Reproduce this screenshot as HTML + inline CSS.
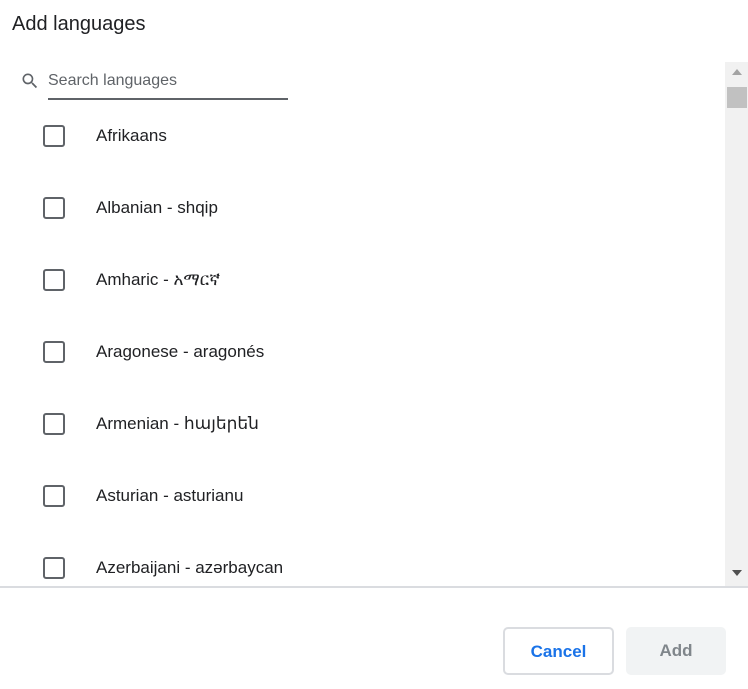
<!DOCTYPE html>
<html><head><style>
*{margin:0;padding:0;box-sizing:border-box}
body{width:748px;height:689px;background:#fff;font-family:"Liberation Sans","Noto Sans CJK JP","DejaVu Sans",sans-serif;color:#202124;position:relative;overflow:hidden}
.title{position:absolute;left:12px;top:13px;font-size:20px;color:#202124}
.search{position:absolute;left:48px;top:72px;font-size:16px;color:#5f6368}
.uline{position:absolute;left:48px;top:98px;width:240px;height:2px;background:#5f6368}
.cb{position:absolute;left:43px;width:22px;height:22px;border:2px solid #5f6368;border-radius:3px}
.lbl{position:absolute;left:96px;font-size:17px;color:#202124}
.sb{position:absolute;left:725px;top:62px;width:23px;height:524px;background:#f1f1f1}
.thumb{position:absolute;left:727px;top:87px;width:20px;height:21px;background:#c1c1c1}
.div{position:absolute;left:0;top:586px;width:748px;height:2px;background:#dadce0}
.btn{position:absolute;top:627px;height:48px;border-radius:5px;font-size:17px;font-weight:bold;text-align:center;line-height:46px}
</style></head><body>
<div class="title">Add languages</div>
<svg style="position:absolute;left:20px;top:71px" width="20" height="20" viewBox="0 0 24 24"><path fill="#5f6368" d="M15.5 14h-.79l-.28-.27A6.470 6.470 0 0 0 16 9.5 6.5 6.5 0 1 0 9.5 16c1.61 0 3.09-.59 4.23-1.57l.27.28v.79l5 4.99L20.490 19l-4.99-5zm-6 0C7.01 14 5 11.990 5 9.5S7.010 5 9.5 5 14 7.010 14 9.5 11.990 14 9.5 14z"/></svg>
<div class="search">Search languages</div>
<div class="uline"></div>
<div class="cb" style="top:125px"></div><div class="lbl" style="top:126px">Afrikaans</div>
<div class="cb" style="top:197px"></div><div class="lbl" style="top:198px">Albanian - shqip</div>
<div class="cb" style="top:269px"></div><div class="lbl" style="top:270px">Amharic - አማርኛ</div>
<div class="cb" style="top:341px"></div><div class="lbl" style="top:342px">Aragonese - aragonés</div>
<div class="cb" style="top:413px"></div><div class="lbl" style="top:414px">Armenian - հայերեն</div>
<div class="cb" style="top:485px"></div><div class="lbl" style="top:486px">Asturian - asturianu</div>
<div class="cb" style="top:557px"></div><div class="lbl" style="top:558px">Azerbaijani - azərbaycan</div>
<div class="sb"></div><div class="thumb"></div>
<svg style="position:absolute;left:732px;top:69px" width="10" height="6"><path d="M0 6L5 0L10 6Z" fill="#a3a3a3"/></svg>
<svg style="position:absolute;left:732px;top:570px" width="10" height="6"><path d="M0 0L10 0L5 6Z" fill="#505050"/></svg>
<div class="div"></div>
<div class="btn" style="left:503px;width:111px;border:2px solid #dadce0;color:#1a73e8;background:#fff">Cancel</div>
<div class="btn" style="left:626px;width:100px;background:#f1f3f4;color:#80868b;line-height:48px">Add</div>
</body></html>
